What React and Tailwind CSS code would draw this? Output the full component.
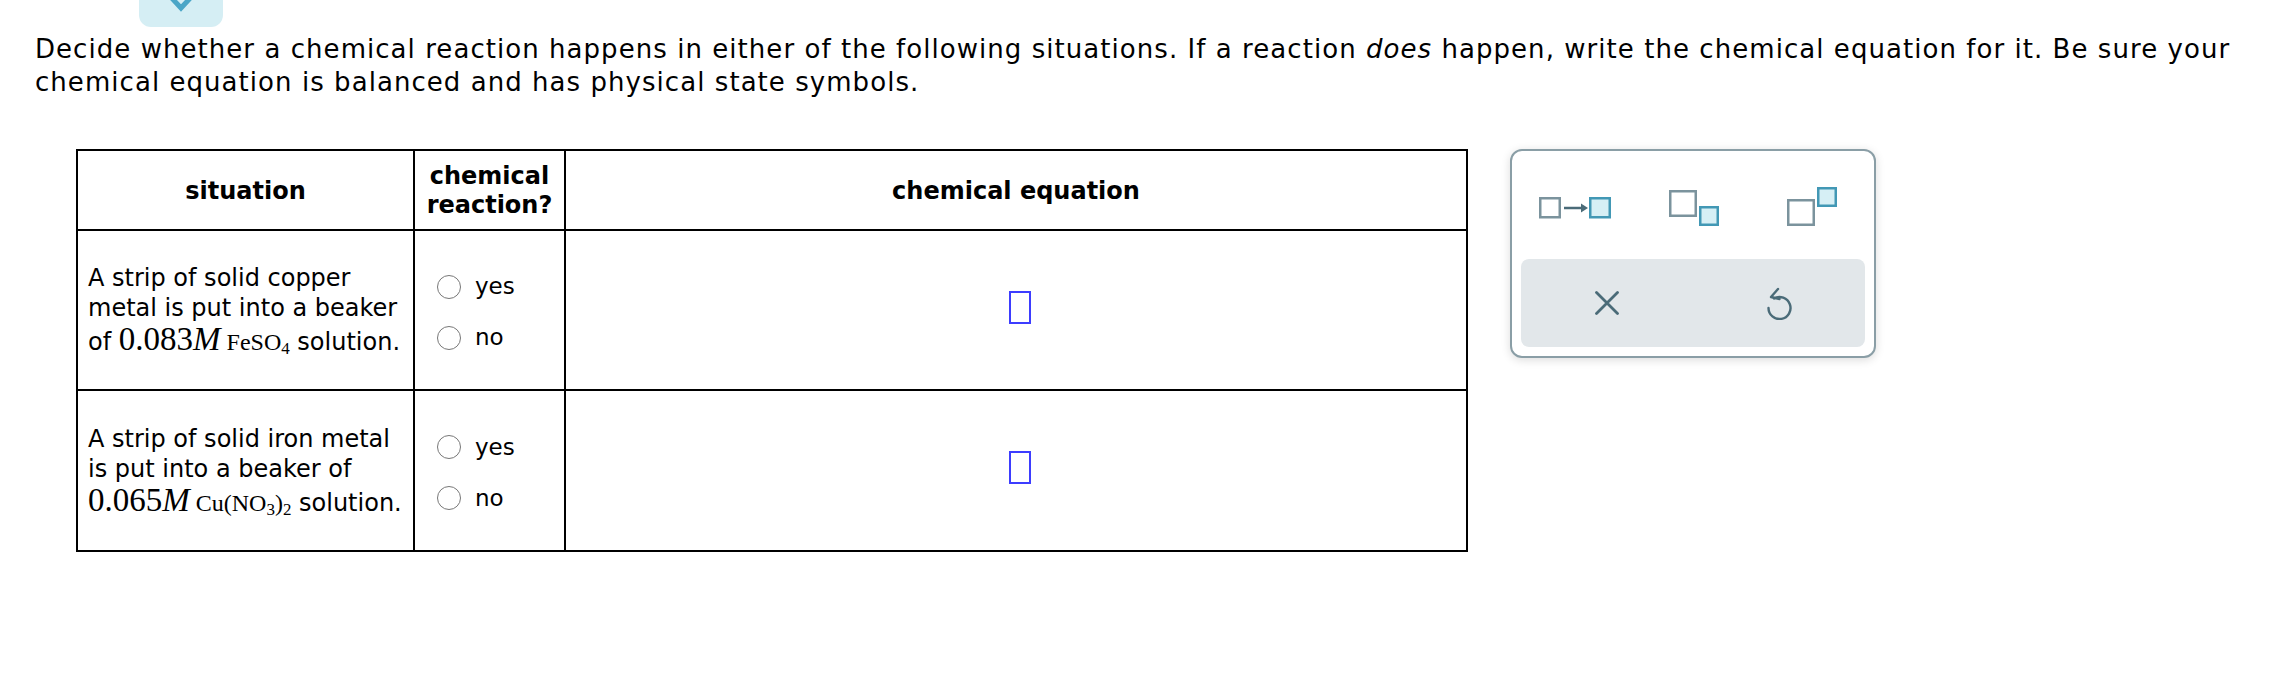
import React from 'react';

function Radio({ label }) {
  return (
    <div className="flex items-center gap-[14px] h-[26px]">
      <span className="w-[24px] h-[24px] rounded-full border-[1.5px] border-[#777] bg-white"></span>
      <span className="text-[23px] leading-none">{label}</span>
    </div>
  );
}

function AnswerBox() {
  return <span className="block w-[22px] h-[33px] border-2 border-[#3d3dff]"></span>;
}

function Math({ children }) {
  return <span className="font-['Liberation_Serif','Times_New_Roman',serif] leading-none">{children}</span>;
}

function ArrowIcon() {
  return (
    <svg width="72" height="22" viewBox="0 0 72 22">
      <rect x="1.25" y="1.25" width="19.5" height="19" fill="#fff" stroke="#7b939d" strokeWidth="2.5" />
      <line x1="25" y1="11" x2="44" y2="11" stroke="#4a6b78" strokeWidth="2.5" />
      <polygon points="42,6.5 49,11 42,15.5" fill="#4a6b78" />
      <rect x="51.25" y="1.25" width="19.5" height="19" fill="#d6eff5" stroke="#4298b5" strokeWidth="2.5" />
    </svg>
  );
}

function SubIcon() {
  return (
    <svg width="50" height="36" viewBox="0 0 50 36">
      <rect x="1.25" y="1.25" width="25.5" height="24.5" fill="#fff" stroke="#7b939d" strokeWidth="2.5" />
      <rect x="31.25" y="17.25" width="17.5" height="17.5" fill="#d6eff5" stroke="#4298b5" strokeWidth="2.5" />
    </svg>
  );
}

function SupIcon() {
  return (
    <svg width="50" height="39" viewBox="0 0 50 39">
      <rect x="1.25" y="13.25" width="25.5" height="24.5" fill="#fff" stroke="#7b939d" strokeWidth="2.5" />
      <rect x="31.25" y="1.25" width="17.5" height="17.5" fill="#d6eff5" stroke="#4298b5" strokeWidth="2.5" />
    </svg>
  );
}

function SituationCell({ children }) {
  return (
    <div className="border-r-2 border-black flex items-center pl-[10px] pr-[2px]">
      <p className="text-[24px] leading-[30px]">{children}</p>
    </div>
  );
}

export default function App() {
  return (
    <div className="w-[2293px] h-[684px] bg-white text-black font-['DejaVu_Sans',Verdana,sans-serif] overflow-hidden">
      {/* collapsed toggle tab */}
      <div className="ml-[139px] w-[84px] h-[27px] bg-[#d5eef4] rounded-b-[12px] overflow-hidden">
        <svg width="84" height="27" viewBox="0 0 84 27">
          <polyline points="29,-6 42,8 55,-6" fill="none" stroke="#4ba6c7" strokeWidth="5" />
        </svg>
      </div>

      <p className="mt-[6px] ml-[35px] w-[2245px] text-[26px] leading-[33px] tracking-[1.05px]">
        Decide whether a chemical reaction happens in either of the following situations. If a reaction <i>does</i> happen, write the chemical equation for it. Be sure your chemical equation is balanced and has physical state symbols.
      </p>

      <div className="flex items-start mt-[50px] ml-[76px]">
        <div className="w-[1392px] border-2 border-black">
          <div className="grid grid-cols-[337px_151px_1fr] h-[80px] border-b-2 border-black font-bold text-[24px]">
            <div className="border-r-2 border-black flex items-center justify-center pt-[2px]">situation</div>
            <div className="border-r-2 border-black flex items-center justify-center text-center leading-[29px] pt-[2px]">chemical<br />reaction?</div>
            <div className="flex items-center justify-center pt-[2px]">chemical equation</div>
          </div>

          <div className="grid grid-cols-[337px_151px_1fr] h-[160px] border-b-2 border-black">
            <SituationCell>
              A strip of solid copper metal is put into a beaker of{' '}
              <Math><span className="text-[33px]">0.083<i>M</i></span> <span className="text-[24px]">FeSO<sub className="text-[17px]">4</sub></span></Math> solution.
            </SituationCell>
            <div className="border-r-2 border-black flex flex-col justify-center gap-[25px] pl-[22px] pt-[4px]">
              <Radio label="yes" />
              <Radio label="no" />
            </div>
            <div className="flex items-center justify-center pl-[8px] pb-[6px]"><AnswerBox /></div>
          </div>

          <div className="grid grid-cols-[337px_151px_1fr] h-[159px]">
            <SituationCell>
              A strip of solid iron metal is put into a beaker of{' '}
              <Math><span className="text-[33px]">0.065<i>M</i></span> <span className="text-[24px]">Cu(NO<sub className="text-[17px]">3</sub>)<sub className="text-[17px]">2</sub></span></Math> solution.
            </SituationCell>
            <div className="border-r-2 border-black flex flex-col justify-center gap-[25px] pl-[22px] pt-[4px]">
              <Radio label="yes" />
              <Radio label="no" />
            </div>
            <div className="flex items-center justify-center pl-[8px] pb-[6px]"><AnswerBox /></div>
          </div>
        </div>

        {/* answer tools panel */}
        <div className="ml-[42px] w-[366px] h-[209px] border-2 border-[#8a9ea6] rounded-[12px] bg-white shadow-[0_2px_10px_rgba(0,0,0,0.14)] p-[9px] flex flex-col">
          <div className="flex-1 flex items-center pl-[18px] pb-[4px]">
            <ArrowIcon />
            <span className="ml-[58px]"><SubIcon /></span>
            <span className="ml-[68px] -mt-[2px]"><SupIcon /></span>
          </div>
          <div className="h-[88px] rounded-[8px] bg-[#e2e7ea] grid grid-cols-2 items-center justify-items-center">
            <svg width="24" height="24" viewBox="0 0 24 24">
              <path d="M1.5 1.5 L22.5 22.5 M22.5 1.5 L1.5 22.5" stroke="#4a6b78" strokeWidth="2.8" strokeLinecap="round" />
            </svg>
            <svg width="26" height="33" viewBox="0 0 26 33">
              <path d="M2.5 21 A11 11 0 1 0 8 11.5" fill="none" stroke="#4a6b78" strokeWidth="2.4" strokeLinecap="round" />
              <path d="M12 2 L5 10 L13.5 12" fill="none" stroke="#4a6b78" strokeWidth="2.4" strokeLinecap="round" strokeLinejoin="round" />
            </svg>
          </div>
        </div>
      </div>
    </div>
  );
}
